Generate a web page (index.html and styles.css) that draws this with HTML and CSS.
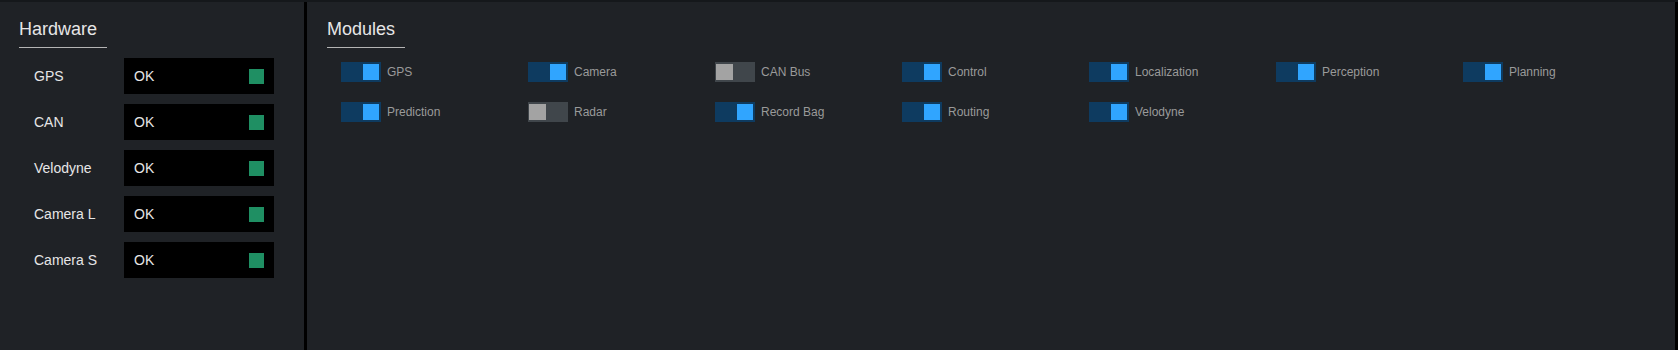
FILE: index.html
```html
<!DOCTYPE html>
<html>
<head>
<meta charset="utf-8">
<link rel="stylesheet" href="styles.css">
</head>
<body>
<div class="app">
  <section class="panel hardware">
    <h2 class="title">Hardware</h2>
    <div class="hw-list">
      <div class="hw-row"><span class="hw-name">GPS</span><div class="hw-status"><span>OK</span><i class="dot"></i></div></div>
      <div class="hw-row"><span class="hw-name">CAN</span><div class="hw-status"><span>OK</span><i class="dot"></i></div></div>
      <div class="hw-row"><span class="hw-name">Velodyne</span><div class="hw-status"><span>OK</span><i class="dot"></i></div></div>
      <div class="hw-row"><span class="hw-name">Camera L</span><div class="hw-status"><span>OK</span><i class="dot"></i></div></div>
      <div class="hw-row"><span class="hw-name">Camera S</span><div class="hw-status"><span>OK</span><i class="dot"></i></div></div>
    </div>
  </section>
  <section class="panel modules">
    <h2 class="title">Modules</h2>
    <div class="mod-grid">
      <div class="mod"><span class="toggle on"><i></i></span><span class="mod-name">GPS</span></div>
      <div class="mod"><span class="toggle on"><i></i></span><span class="mod-name">Camera</span></div>
      <div class="mod"><span class="toggle off"><i></i></span><span class="mod-name">CAN Bus</span></div>
      <div class="mod"><span class="toggle on"><i></i></span><span class="mod-name">Control</span></div>
      <div class="mod"><span class="toggle on"><i></i></span><span class="mod-name">Localization</span></div>
      <div class="mod"><span class="toggle on"><i></i></span><span class="mod-name">Perception</span></div>
      <div class="mod"><span class="toggle on"><i></i></span><span class="mod-name">Planning</span></div>
      <div class="mod"><span class="toggle on"><i></i></span><span class="mod-name">Prediction</span></div>
      <div class="mod"><span class="toggle off"><i></i></span><span class="mod-name">Radar</span></div>
      <div class="mod"><span class="toggle on"><i></i></span><span class="mod-name">Record Bag</span></div>
      <div class="mod"><span class="toggle on"><i></i></span><span class="mod-name">Routing</span></div>
      <div class="mod"><span class="toggle on"><i></i></span><span class="mod-name">Velodyne</span></div>
    </div>
  </section>
</div>
</body>
</html>
```
FILE: styles.css
```css
html, body {
  margin: 0;
  padding: 0;
  background: #000;
  font-family: "Liberation Sans", Arial, sans-serif;
}
.app {
  display: flex;
  height: 348px;
  border-top: 2px solid #15181b;
  background: #000;
}
.panel {
  background: #1f2226;
  box-sizing: border-box;
  padding-top: 15px;
}
.hardware {
  width: 304px;
  padding-left: 19px;
  margin-right: 3px;
}
.modules {
  flex: 1;
  padding-left: 20px;
  margin-right: 3px;
}
.title {
  display: inline-block;
  margin: 0;
  font-size: 18px;
  font-weight: normal;
  line-height: 24px;
  color: #e6e6e6;
  padding-bottom: 6px;
  padding-right: 10px;
  border-bottom: 1px solid #b4b4b4;
}
.hw-list {
  display: flex;
  flex-direction: column;
  gap: 10px;
  margin-top: 10px;
  padding-left: 15px;
}
.hw-row {
  display: flex;
  align-items: center;
  height: 36px;
}
.hw-name {
  width: 90px;
  font-size: 14px;
  color: #e6e6e6;
}
.hw-status {
  width: 150px;
  height: 36px;
  box-sizing: border-box;
  background: #000;
  display: flex;
  align-items: center;
  justify-content: space-between;
  padding: 0 10px;
  font-size: 14px;
  color: #e6e6e6;
}
.dot {
  width: 15px;
  height: 15px;
  background: #1f8f63;
}
.mod-grid {
  display: grid;
  grid-template-columns: repeat(7, 187px);
  row-gap: 20px;
  margin-top: 14px;
  padding-left: 14px;
}
.mod {
  display: flex;
  align-items: center;
  height: 20px;
}
.toggle {
  width: 40px;
  height: 20px;
  box-sizing: border-box;
  padding: 2px;
  display: flex;
  margin-right: 6px;
}
.toggle i {
  width: 16px;
  height: 16px;
}
.toggle.on {
  background: #0e3b60;
  justify-content: flex-end;
}
.toggle.on i {
  background: #30a5ff;
}
.toggle.off {
  background: #40464b;
  padding-left: 1px;
}
.toggle.off i {
  width: 17px;
  background: #a3a3a3;
}
.mod-name {
  font-size: 12px;
  color: #9a9a9a;
}
```
